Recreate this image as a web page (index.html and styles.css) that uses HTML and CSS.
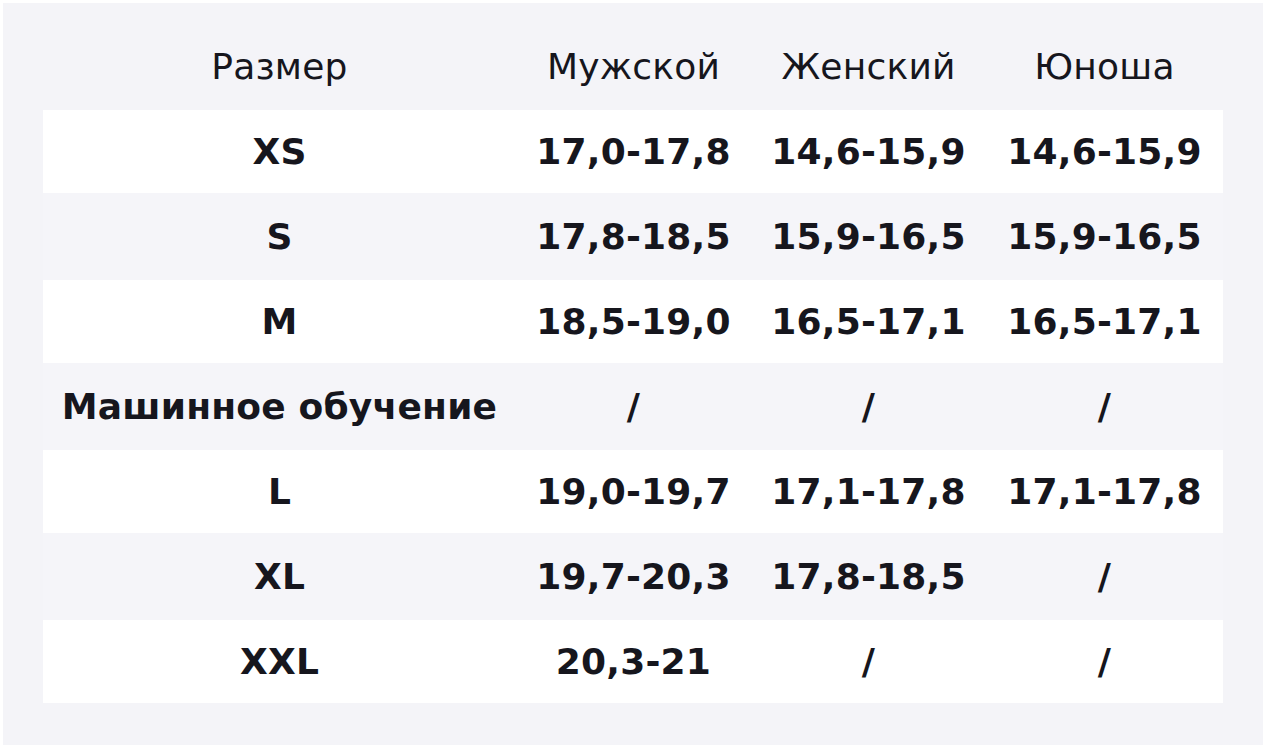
FILE: index.html
```html
<!DOCTYPE html>
<html lang="ru">
<head>
<meta charset="utf-8">
<link rel="stylesheet" href="styles.css">
</head>
<body>
<div class="panel">
  <table class="sizes">
    <colgroup>
      <col class="c1"><col class="c2"><col class="c3"><col class="c4">
    </colgroup>
    <thead>
      <tr class="head"><th>Размер</th><th>Мужской</th><th>Женский</th><th>Юноша</th></tr>
    </thead>
    <tbody>
      <tr class="odd"><td>XS</td><td>17,0-17,8</td><td>14,6-15,9</td><td>14,6-15,9</td></tr>
      <tr class="even"><td>S</td><td>17,8-18,5</td><td>15,9-16,5</td><td>15,9-16,5</td></tr>
      <tr class="odd"><td>M</td><td>18,5-19,0</td><td>16,5-17,1</td><td>16,5-17,1</td></tr>
      <tr class="even"><td>Машинное обучение</td><td>/</td><td>/</td><td>/</td></tr>
      <tr class="odd"><td>L</td><td>19,0-19,7</td><td>17,1-17,8</td><td>17,1-17,8</td></tr>
      <tr class="even"><td>XL</td><td>19,7-20,3</td><td>17,8-18,5</td><td>/</td></tr>
      <tr class="odd"><td>XXL</td><td>20,3-21</td><td>/</td><td>/</td></tr>
    </tbody>
  </table>
</div>
</body>
</html>
```

FILE: styles.css
```css
html, body {
  margin: 0;
  padding: 0;
  background: #ffffff;
}
body {
  padding: 3px;
  font-family: "DejaVu Sans", Verdana, sans-serif;
  color: #16161d;
}
.panel {
  width: 1260px;
  height: 742px;
  box-sizing: border-box;
  background: #f4f4f8;
  padding: 20px 40px 0 40px;
}
.sizes {
  width: 1180px;
  border-collapse: collapse;
  table-layout: fixed;
}
.c1 { width: 473px; }
.c2 { width: 235px; }
.c3 { width: 235px; }
.c4 { width: 237px; }
.sizes th, .sizes td {
  padding: 0;
  text-align: center;
  font-size: 36px;
  white-space: nowrap;
  letter-spacing: 0.2px;
}
.sizes th {
  font-weight: normal;
  height: 87px;
}
.sizes td {
  font-weight: bold;
}
.odd td {
  background: #ffffff;
  height: 83px;
}
.even td {
  background: #f5f5f9;
  height: 87px;
}
```
